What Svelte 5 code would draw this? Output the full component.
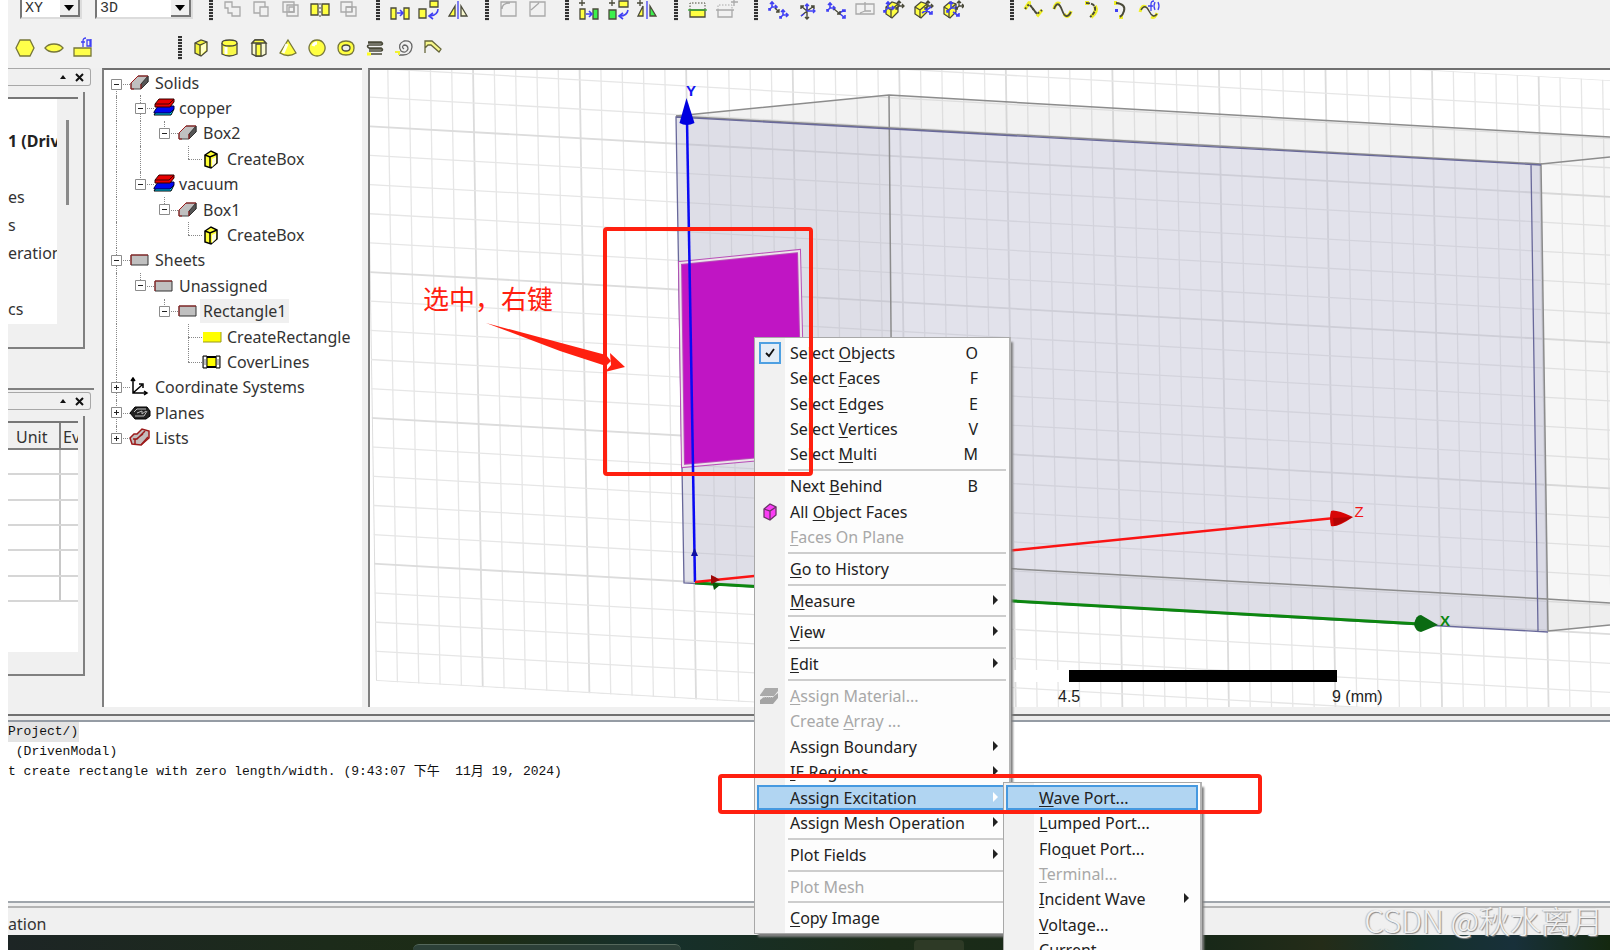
<script>
  const axes = (x, y, s = 5) =>
    `M${x} ${y}v${-s}m-2 2l2-2 2 2M${x} ${y}h${s}m-2-2l2 2-2 2M${x} ${y}l${-s + 2} ${s - 2}m0-2v2h2`;

  const gray = '#a9a9a9', ink = '#4a4a3a', yel = '#ffff42', blu = '#4040f4', grn = '#3cf04c', gold = '#f0f028';
  const p = (d, stroke = ink, fill = 'none', w = 1.3, dash = '') => ({ d, stroke, fill, w, dash });

  const cube = [
    p('M4 7l6-5 6 2v8l-6 6-6-4z', ink, yel), p('M4 7l5 3 7-6M9 10v8', ink)
  ];

  const modelGroups = [
    { name: 'Boolean', tools: [
      { name: 'Unite', s: [p('M4 2h7v5h8v9h-8v-3h-4v-5h-3z', gray)] },
      { name: 'Subtract', s: [p('M10 13H4V2h11v5', gray), p('M10 7h8v9h-8z', gray)] },
      { name: 'Intersect', s: [p('M4 2h11v10H4z', gray), p('M8 5h11v11H8z', gray), p('M10 7h5v5h-5z', gray)] },
      { name: 'Split', s: [p('M3 4h7v11H3z', ink, yel), p('M14 4h7v11h-7z', ink, yel), p('M12 3v14', ink, 'none', 1, '2 2')] },
      { name: 'Imprint', s: [p('M4 2h11v10H4z', gray), p('M9 7h10v9H9z', gray), p('M9 7h6v5', gray)] }
    ] },
    { name: 'Arrange', tools: [
      { name: 'Move', s: [p('M3 8h5v11H3z', ink, yel), p('M16 8h5v11h-5z', ink, yel), p('M9 13h6m-3-3l3 3-3 3', blu, 'none', 1.6)] },
      { name: 'Rotate', s: [p('M2 9h7v9H2z', ink, yel), p('M13 1h8v6h-8z', ink, yel), p('M21 9q0 6-8 7m3-3l-4 3 4 3', blu, 'none', 1.6)] },
      { name: 'Mirror', s: [p('M3 16L9 6v10z', ink, yel), p('M12 1v18', blu), p('M15 6l6 10h-6z', ink, '#f7f7ce')] }
    ] },
    { name: 'Corners', tools: [
      { name: 'Fillet', s: [p('M4 2h15v14H4zM5 9q0-6 8-6', gray)] },
      { name: 'Chamfer', s: [p('M4 2h15v14H4zM5 10l8-7', gray)] }
    ] },
    { name: 'Duplicate', tools: [
      { name: 'Duplicate along line', s: [p('M2 3h6M5 0v6'), p('M3 9h5v10H3z', ink, yel), p('M16 9h5v10h-5z', ink, grn), p('M9 14h6m-3-3l3 3-3 3', blu, 'none', 1.6)] },
      { name: 'Duplicate around axis', s: [p('M3 3h6M6 0v6'), p('M3 10h7v9H3z', ink, grn), p('M13 1h9v6h-9z', ink, yel), p('M22 10q-1 6-8 6m3-3l-4 3 4 3', blu, 'none', 1.6)] },
      { name: 'Duplicate mirror', s: [p('M2 3h6M5 0v6'), p('M3 16L8 6v10z', ink, yel), p('M12 1v18', blu), p('M15 6l6 10h-6z', ink, grn)] }
    ] },
    { name: 'Section', tools: [
      { name: 'Section plane', s: [p('M4 10V3h15v7', ink, 'none', 1, '1.5 1.5'), p('M4 10h15v7H4z', ink, yel), p('M2 10h19', '#36b036')] },
      { name: 'Add section', s: [p('M3 10V5h14v5', gray, 'none', 1, '1.5 1.5'), p('M3 10h14v7H3zM1 10h18M16 2h7M19 0v6', gray)] }
    ] },
    { name: 'Coordinate', tools: [
      { name: 'Offset system', s: [p(axes(6, 7), blu, 'none', 1.6), p(axes(17, 15), blu, 'none', 1.6), p('M9 8l4 4m-3 0h3v-3')] },
      { name: 'Rotated system', s: [p('M12 4v15m-2-2l2 2 2-2M12 11l-6-5m0 3V6h3M12 11l7-5m-3 0h3v3M12 11l-6 5', ink, 'none', 1.4), p('M12 11V4m-2 2l2-2 2 2M12 11h8m-2-2l2 2-2 2M9 14l-3 2', blu)] },
      { name: 'Offset and rotated', s: [p(axes(6, 8), blu, 'none', 1.6), p('M15 13l6 5m-3 0h3v-3', blu, 'none', 1.6), p('M15 13l6-3m-3 0h3v2', blu, 'none', 1.6), p('M10 9l6 5m-3 0h3v-3')] },
      { name: 'Object system', s: [p('M3 4h18v10H3zM12 2v9h6M12 11l-5 2', gray)] },
      { name: 'Face system', s: [...cube, p(axes(6, 8, 6), blu, 'none', 1.6), p(axes(17, 6, 5))] },
      { name: 'Edge system', s: [...cube, p(axes(17, 6, 5)), p('M11 13l9-6M14 9l7 5m-3 0h3v-3', blu, 'none', 1.6)] },
      { name: 'Vertex system', s: [...cube, p(axes(11, 8, 6), blu, 'none', 1.6), p(axes(19, 6, 5)), p('M13 12l6 4m-3 0h3v-3', blu, 'none', 1.6)] }
    ] },
    { name: 'Draw line', tools: [
      { name: 'Line', s: [p('M3 9l4-6h2M15 14l1 1 4-5', gold, 'none', 3.5), p('M3 9l4-5 8 10 5-4', ink, 'none', 1.8, '2 2'), p('M8 5l7 9', ink, 'none', 2)] },
      { name: 'Spline', s: [p('M3 9q2-8 6-5M13 14q4 6 7-3', gold, 'none', 3.5), p('M3 9q4-10 8 1t9 2', ink, 'none', 1.8)] },
      { name: 'Centre arc', s: [p('M5 3h4M15 6q3 6-4 11', gold, 'none', 4), p('M6 3q10 0 9 7-1 4-5 7', ink, 'none', 2, '4 1')] },
      { name: 'Three point arc', s: [p('M5 3h3M10 17h4', gold, 'none', 4), p('M7 3q10 1 8 8-1 4-4 6', ink, 'none', 2), p('M6 9h3v3H6z', blu, blu, 0)] },
      { name: 'Equation curve', s: [p('M2 12q2-8 6-5M13 17q4 2 6-4', gold, 'none', 3), p('M3 10q4-7 8 1t8 3', ink, 'none', 1.5), p('M13 11V4q0-3 3-3M10 6h5M17 2q-2 4 0 8M20 2q2 4 0 8', blu)] }
    ] }
  ];

  const sheetTools = [
    { name: 'Regular polygon', s: [p('M7 4h10l4 8-4 8H7l-4-8z', '#77773a', '#ffff4a')] },
    { name: 'Ellipse', s: [p('M3 12q3-4 9-4t9 4q-3 4-9 4t-9-4z', '#77773a', '#ffff4a')] },
    { name: 'Equation surface', s: [p('M3 12h17v8H3z', '#77773a', '#ffff4a'), p('M12 11V5q0-3 3-3M10 6h4M16 4v6h3V4zM20 3v8', blu)] }
  ];

  const solidTools = [
    { name: 'Box', s: [p('M6 7l6-3 6 2v9l-6 5-6-3z', ink, '#f4f43c'), p('M6 7l5 2 7-3M11 9v11'), p('M12 10l5-3v7l-5 5z', '#fff', '#ffffc8', 0)] },
    { name: 'Cylinder', s: [p('M4 7v11q7 4 15 0V7', ink, '#f8f84a'), p('M4 7q0-3 7.500-3T19 7t-7.500 3T4 7z', ink, yel), p('M8 11v7', '#fff', 'none', 3)] },
    { name: 'Polyhedron', s: [p('M5 7l3-3h8l3 3v11l-4 2H9l-4-2z', ink, '#f8f8d0'), p('M5 7h14l-3-3H8z', ink, yel), p('M9 8h5v12H9z', ink, yel)] },
    { name: 'Cone', s: [p('M12 4l8 13q-8 5-16 0z', '#77773a', '#ffff42'), p('M11 8l-4 9', '#fffff0', 'none', 3)] },
    { name: 'Sphere', s: [p('M12 4a8 8 0 1 0 .1 0z', '#77773a', '#ffff42'), p('M8 10q1-3 4-3', '#fff', 'none', 3)] },
    { name: 'Torus', s: [p('M4 12q0-7 8-7t8 7-8 7-8-7z', '#77773a', '#ffff42'), p('M8 12q0-3 4-3t4 3-4 3-4-3z', ink, '#eee')] },
    { name: 'Helix', s: [p('M5 6h13q3 2 0 3H6q-3 1 0 3h12q3 2 0 3H6M6 18h13M5 7h14M6 13h13', ink, 'none', 1.6), p('M4 18h4', '#ffff20', 'none', 3)] },
    { name: 'Spiral', s: [p('M12 13q-3-2 0-4 4 0 4 4-2 5-7 2-4-7 3-10 8-1 8 6-1 8-9 8H7', '#666'), p('M3 16h4v3', '#f2f236', 'none', 2)] },
    { name: 'Bondwire', s: [p('M4 17V5h7l9 8-2 3-8-7H7l-3 3', '#66663a', '#f8f88a')] }
  ];

  const tree = [
    { t: 'Solids', g: '', own: 'first', x: '-', i: 'solid' },
    { t: 'copper', g: '|', own: 'mid', x: '-', i: 'material' },
    { t: 'Box2', g: '||', own: 'end', x: '-', i: 'solid' },
    { t: 'CreateBox', g: '||.', own: 'end', i: 'box' },
    { t: 'vacuum', g: '|', own: 'end', x: '-', i: 'material' },
    { t: 'Box1', g: '|.', own: 'end', x: '-', i: 'solid' },
    { t: 'CreateBox', g: '|..', own: 'end', i: 'box' },
    { t: 'Sheets', g: '', own: 'mid', x: '-', i: 'sheet' },
    { t: 'Unassigned', g: '|', own: 'end', x: '-', i: 'sheet' },
    { t: 'Rectangle1', g: '|.', own: 'end', x: '-', i: 'sheet', sel: true },
    { t: 'CreateRectangle', g: '|..', own: 'mid', i: 'rect' },
    { t: 'CoverLines', g: '|..', own: 'end', i: 'cover' },
    { t: 'Coordinate Systems', g: '', own: 'mid', x: '+', i: 'cs' },
    { t: 'Planes', g: '', own: 'mid', x: '+', i: 'planes' },
    { t: 'Lists', g: '', own: 'end', x: '+', i: 'lists' }
  ];

  const menu = [
    { t: 'Select &Objects', k: 'O', check: true }, { t: 'Select &Faces', k: 'F' }, { t: 'Select &Edges', k: 'E' },
    { t: 'Select &Vertices', k: 'V' }, { t: 'Select &Multi', k: 'M' }, null,
    { t: 'Next &Behind', k: 'B' }, { t: 'All &Object Faces', icon: 'faces' }, { t: '&Faces On Plane', off: true }, null,
    { t: '&Go to History' }, null, { t: '&Measure', sub: true }, null, { t: '&View', sub: true }, null,
    { t: '&Edit', sub: true }, null,
    { t: '&Assign Material...', off: true, icon: 'mat' }, { t: 'Create &Array ...', off: true },
    { t: 'Assign Boundary', sub: true }, { t: '&IE Regions', sub: true },
    { t: 'Assign Excitation', sub: true, hot: true }, { t: 'Assign Mesh Operation', sub: true }, null,
    { t: 'Plot Fields', sub: true }, null, { t: 'Plot Mesh', off: true }, null, { t: '&Copy Image' }
  ];
  const submenu = [
    { t: '&Wave Port...', hot: true }, { t: '&Lumped Port...' }, { t: 'Flo&quet Port...' }, { t: '&Terminal...', off: true },
    { t: '&Incident Wave', sub: true }, { t: '&Voltage...' }, { t: 'C&urrent...' }
  ];
  const split = (t) => {
    const n = t.indexOf('&');
    return n < 0 ? [t, '', ''] : [t.slice(0, n), t[n + 1], t.slice(n + 2)];
  };

  const log = [
    { t: 'Project/)', picked: true },
    { t: ' (DrivenModal)' },
    { t: 't create rectangle with zero length/width. (9:43:07 下午  11月 19, 2024)' }
  ];

  const cols = Array.from({ length: 60 }, (_, i) => ({ x: 366.5 + 21.31 * i, major: i % 5 === 0 }));
  const rows = Array.from({ length: 24 }, (_, j) => ({ y: 9.7 + 29.15 * j, major: j % 5 === 4 }));
</script>

{#snippet tool(b, h)}
  <button class="tool" aria-label={b.name}>
    <svg width="24" height={h} viewBox="0 0 24 {h}">
      {#each b.s as s}
        <path d={s.d} stroke={s.stroke} fill={s.fill} stroke-width={s.w} stroke-dasharray={s.dash || null} />
      {/each}
    </svg>
  </button>
{/snippet}

{#snippet treeIcon(i)}
  <svg width="22" height="20" viewBox="0 0 22 20">
    {#if i === 'solid'}
      <path d="M2 16V10L9 3h10v6l-7 7z" fill="#c0c0c0" stroke="#444" />
      <path d="M12 16v-5l7-8v6z" fill="#555" stroke="#333" />
      <path d="M2 16v-6l7-7h10M2 16h3M12 16v-5" fill="none" stroke="#9c1a1a" />
    {:else if i === 'material'}
      <path d="M1 17l4-6h16l-3 6z" fill="#00d8ff" stroke="#000" />
      <path d="M1 14l4-6h16v3l-4 4H1z" fill="#0008f0" stroke="#000040" />
      <path d="M2 6l4-5h15v3l-4 5H2z" fill="#e80000" stroke="#300" />
      <path d="M2 6h14l5-5" fill="none" stroke="#400" />
    {:else if i === 'box'}
      <path d="M4 6l6-4 6 3v9l-6 5-6-2z" fill="#ff3" stroke="#000" stroke-width="1.5" />
      <path d="M4 6l5 2 7-3M9 8v10" fill="none" stroke="#000" stroke-width="1.5" />
      <path d="M11 10l4-2v6l-4 4z" fill="#fffde0" />
    {:else if i === 'sheet'}
      <path d="M2 5h17v10H2z" fill="#c0c0c0" stroke="#333" />
      <path d="M2 15V5h17" fill="none" stroke="#a02020" />
    {:else if i === 'rect'}
      <path d="M2 5h18v10H2z" fill="#ff0" />
      <path d="M2 15h18V5" fill="none" stroke="#99991a" />
    {:else if i === 'cover'}
      <path d="M3 5h15v10H3z" fill="#ff0" stroke="#000" stroke-width="2" />
      <path d="M2 4h4v12H2zM15 4h4v12h-4z" fill="#bbb" stroke="#000" />
      <path d="M3 5h2v2H3zM16 5h2v2h-2zM3 13h2v2H3zM16 13h2v2h-2z" fill="#fff" />
    {:else if i === 'cs'}
      <path d="M4 2v14h14M4 16l9-8M2 4l2-3 2 3M15 14l3 2-3 2M10 7h4v4" fill="none" stroke="#000" stroke-width="1.5" />
    {:else if i === 'planes'}
      <path d="M1 10l5-6h12l3 4v5l-4 3H6z" fill="#222" stroke="#000" />
      <path d="M5 9l3-3h9M6 13h9l3-5M8 10l5-2v3l4-3" fill="none" stroke="#bbb" />
    {:else}
      <path d="M1 10l4-4h3l5-5 7 2v7l-8 7-9-1z" fill="#c4bcbc" stroke="#9c1a1a" stroke-width="1.5" />
      <path d="M4 11l4 0 8-8M6 16v-4l8-6M12 17l7-8" fill="none" stroke="#9c1a1a" stroke-width="1.5" />
    {/if}
  </svg>
{/snippet}

{#snippet dockTitle(name)}
  <header class="dock-title">
    <button aria-label="Collapse {name}"><svg width="8" height="6" viewBox="0 0 8 6"><path d="M1 5l3-4 3 4z" fill="#111" /></svg></button>
    <button aria-label="Close {name}"><svg width="9" height="9" viewBox="0 0 9 9"><path d="M1 1l7 7M8 1L1 8" stroke="#111" stroke-width="2" /></svg></button>
  </header>
{/snippet}

{#snippet menuItem(m)}
  {@const part = split(m.t)}
  <button class="item" class:off={m.off} class:hot={m.hot} role="menuitem" disabled={m.off}>
    <span class="lead">
      {#if m.check}
        <span class="check"><svg width="12" height="12" viewBox="0 0 12 12"><path d="M2 6l3 3 5-7" fill="none" stroke="#111" stroke-width="1.8" /></svg></span>
      {:else if m.icon === 'faces'}
        <svg width="22" height="18" viewBox="-3 0 22 18">
          <path d="M2 6l6-5 6 3v8l-6 5-6-3z" fill="#fb3cf6" stroke="#6a3468" stroke-width="1.3" />
          <path d="M2 6l6 2 6-4M8 8v9" fill="none" stroke="#6a3468" stroke-width="1.3" />
        </svg>
      {:else if m.icon === 'mat'}
        <svg width="20" height="18" viewBox="0 0 20 18">
          <path d="M1 8l5-7h13v3l-4 5H1z" fill="#aaa" /><path d="M1 16v-3l4-3h9l5-4v5l-5 6H1z" fill="#a4a4a4" />
          <path d="M3 10h12" stroke="#ddd" stroke-dasharray="1 1" />
        </svg>
      {/if}
    </span>
    <span class="text">{part[0]}<u>{part[1]}</u>{part[2]}</span>
    {#if m.k}<span class="key">{m.k}</span>{/if}
    {#if m.sub}<svg class="more" width="6" height="12" viewBox="0 0 6 12"><path d="M0 0l5 5-5 5z" fill="currentColor" /></svg>{/if}
  </button>
{/snippet}

<div class="app">
  <div class="bar first">
    <label class="combo plane" aria-label="Drawing plane">
      <select><option>XY</option></select>
      <span class="drop"><svg width="10" height="6" viewBox="0 0 10 6"><path d="M0 0h10L5 6z" /></svg></span>
    </label>
    <label class="combo mode" aria-label="Movement mode">
      <select><option>3D</option></select>
      <span class="drop"><svg width="10" height="6" viewBox="0 0 10 6"><path d="M0 0h10L5 6z" /></svg></span>
    </label>
    <div class="groups">
      {#each modelGroups as g}
        <div class="group" role="toolbar" aria-label={g.name}>
          <span class="grip"></span>
          {#each g.tools as b}{@render tool(b, 20)}{/each}
        </div>
      {/each}
    </div>
  </div>
  <div class="bar second">
    <div class="group" role="toolbar" aria-label="Sheets">
      {#each sheetTools as b}{@render tool(b, 24)}{/each}
    </div>
    <div class="group solids" role="toolbar" aria-label="Solids">
      <span class="grip"></span>
      {#each solidTools as b}{@render tool(b, 24)}{/each}
    </div>
  </div>

  <div class="work">
    <aside class="docks">
      <section class="dock project">
        {@render dockTitle('project')}
        <div class="frame">
          <div class="inset split">
            <ul class="names">
              <li><b>1 (Driven)</b></li><li></li><li>es</li><li>s</li><li>erations</li><li></li><li>cs</li>
            </ul>
            <span class="thumb"></span>
          </div>
        </div>
      </section>
      <section class="dock props">
        {@render dockTitle('properties')}
        <div class="frame">
          <div class="inset">
            <table>
              <thead><tr><th>Unit</th><th>Ev</th></tr></thead>
              <tbody>{#each [0, 1, 2, 3, 4, 5] as r (r)}<tr><td></td><td></td></tr>{/each}</tbody>
            </table>
            <div class="blank"></div>
          </div>
        </div>
      </section>
    </aside>

    <nav class="tree">
      <ul>
        {#each tree as n}
          <li>
            {#each n.g.split('') as c}<span class="cell" class:line={c === '|'}></span>{/each}
            <span class="cell own {n.own}">
              {#if n.x}
                <button class="expander" aria-label="Toggle {n.t}">
                  <svg width="11" height="11" viewBox="0 0 11 11">
                    <path d="M.5.5h10v10H.5z" fill="#fff" stroke="#8c8c8c" />
                    <path d={n.x === '-' ? 'M3 5.5h5' : 'M3 5.5h5M5.5 3v5'} stroke="#222" />
                  </svg>
                </button>
              {/if}
            </span>
            <span class="icon">{@render treeIcon(n.i)}</span>
            <span class="name" class:sel={n.sel}>{n.t}</span>
          </li>
        {/each}
      </ul>
    </nav>

    <main class="view">
      <svg viewBox="370 70 1240 637" preserveAspectRatio="xMinYMin slice">
        <defs>
          <clipPath id="plane"><path d="M365.5 8L1610 80.3V752L376 681z" /></clipPath>
        </defs>
        <g clip-path="url(#plane)">
          {#each cols as c}
            <line x1={c.x} y1="70" x2={c.x + 10} y2="707" stroke={c.major ? '#dcdcdc' : '#e6e6e6'} stroke-width={c.major ? 1.8 : 1.3} />
          {/each}
          {#each rows as r}
            <line x1="370" y1={r.y} x2="1610" y2={r.y + 70.6} stroke={r.major ? '#dcdcdc' : '#e6e6e6'} stroke-width={r.major ? 1.8 : 1.3} />
          {/each}
        </g>
        <path d="M676 116L889 95 1610 137V157L1541 164z" fill="rgba(190,190,190,.2)" />
        <path d="M1541 164l69-7v468l-62 6z" fill="rgba(190,190,190,.14)" />
        <path d="M1547 599l63 4v22l-62 6z" fill="rgba(190,190,190,.14)" />
        <path d="M676 116L1541 164 1548 631 684 583z" fill="rgba(186,186,208,.42)" />
        <path d="M687 117L889 128 892 562 1547 599V631L694 583z" fill="rgba(120,120,140,.03)" />
        <path d="M1531 164h10l7 467h-10z" fill="rgba(120,120,150,.06)" />
        <g fill="none" stroke="#8c8c8c" stroke-width="1.5">
          <path d="M676 116L889 95 1610 137M889 95l4 467M893 562L1547 599l63 4M1541 164l69-7M1548 631l62-6" />
          <path d="M676 116L1541 164 1548 631" />
        </g>
        <path d="M1541 165L676 117 684 583 1548 632M1531 164l7 467" fill="none" stroke="#68689a" stroke-width="1.3" />

        <path d="M679 263L799 251 805 455 683 466z" fill="#c015c4" />
        <path d="M680 263L799 251 804 455 683 466z" fill="none" stroke="#b850b8" stroke-width="4" />
        <path d="M680 263L799 251 804 455 683 466z" fill="none" stroke="#ece6ea" stroke-width="2" />

        <path d="M687 120L695 582" stroke="#0a0af4" stroke-width="2.5" />
        <path d="M686.5 98l8 25q-8 4-15 0z" fill="#0000e0" />
        <path d="M691 556l3.5-8 3.5 8z" fill="#1010a0" />
        <path d="M695 583L1420 624" stroke="#0c870f" stroke-width="3" />
        <path d="M695 582L1335 518" stroke="#fa1414" stroke-width="2.5" />
        <path d="M712 581l8 4-6 5z" fill="#085a08" />
        <path d="M711 575q5 2 9 5l-9 4z" fill="#a00808" />
        <path d="M1331 511q4-2 22 6-16 11-22 9-2-8 0-15z" fill="#d80606" />
        <path d="M1334 526q8-3 19-9l-20 1z" fill="#9c0404" opacity=".6" />
        <path d="M1414 624q2-9 7-9l17 10-17 7q-6-1-7-8z" fill="#0a6b12" />
        <g font-family="Liberation Sans, Arial, sans-serif" text-anchor="middle">
          <text x="691" y="96" font-size="15" font-weight="bold" fill="#1414f0">Y</text>
          <text x="1359" y="517" font-size="15" fill="#f41414">Z</text>
          <text x="1445" y="626" font-size="15" font-weight="bold" fill="#0c870f">X</text>
        </g>
        <path d="M1012 670h57v12h-57z" fill="#fff" />
        <path d="M1069 670h268v12h-268z" fill="#000" />
        <g font-family="Liberation Sans, Arial, sans-serif" font-size="16" fill="#222">
          <text x="1058" y="702">4.5</text>
          <text x="1332" y="702">9 (mm)</text>
        </g>
      </svg>
    </main>
  </div>

  <section class="log">
    {#each log as l}
      <p><span class:picked={l.picked}>{l.t}</span></p>
    {/each}
  </section>
  <footer class="status">ation</footer>
  <div class="taskbar"><span class="search"></span><span class="tile"></span></div>

  <div class="menu main-menu" role="menu">
    {#each menu as m}
      {#if m}{@render menuItem(m)}{:else}<hr />{/if}
    {/each}
  </div>
  <div class="menu sub-menu" role="menu">
    {#each submenu as m}{@render menuItem(m)}{/each}
  </div>

  <div class="mark around-sheet"></div>
  <div class="mark around-port"></div>
  <p class="note">选中，右键</p>
  <svg class="arrow" width="140" height="52" viewBox="0 0 140 52">
    <path d="M0 0L120 32 125 38 120 43 74 28z" fill="#ff2010" />
    <path d="M124 30L139 44 119 49 125 42z" fill="#ff2010" />
  </svg>
  <p class="credit">CSDN @秋水离月</p>
</div>

<style>
  :global(body) { margin: 0; background: #fff; overflow: hidden; }
  * { box-sizing: border-box; }
  p, ul { margin: 0; padding: 0; list-style: none; }
  button, select { font: inherit; color: inherit; border: 0; background: none; padding: 0; margin: 0; }
  svg { display: block; }

  .app {
    position: relative; height: 100vh; margin-left: 8px; overflow: hidden;
    display: flex; flex-direction: column; background: #f0f0f0; color: #333;
    font: 16px/20px "Noto Sans", "Noto Sans CJK SC", sans-serif;
  }

  .bar { display: flex; align-items: flex-start; flex: none; background: #f1f1f1; }
  .first { height: 28px; }
  .second { height: 40px; padding: 8px 0 0 2px; }
  .groups { display: flex; gap: 13px; margin-left: 16px; }
  .groups .group:last-child { margin-left: 31px; }
  .group { display: flex; }
  .solids { margin-left: 81px; }
  .grip {
    width: 4px; height: 21px; margin-right: 5px;
    background: repeating-linear-gradient(#333 0 2px, #ddd 2px 3px);
  }
  .second .grip { height: 24px; }
  .solids .grip { margin-right: 4px; }
  .tool { width: 29px; display: flex; justify-content: center; }

  .combo {
    display: flex; height: 19px; background: #fff; color: #333;
    border: 2px solid #dcdcdc; border-left-color: #777; border-top: 0;
    font: 15px/16px "Liberation Mono", monospace;
  }
  .combo select { appearance: none; flex: 1; min-width: 0; padding-left: 3px; }
  .plane { width: 62px; margin-left: 12px; }
  .mode { width: 98px; margin-left: 13px; }
  .drop {
    width: 20px; display: flex; align-items: center; justify-content: center;
    background: #f0f0f0; border-right: 2px solid #777; border-bottom: 2px solid #777;
  }

  .work { flex: 1; min-height: 0; display: flex; }
  .docks { width: 86px; flex: none; display: flex; flex-direction: column; gap: 39px; }
  .dock-title {
    display: flex; align-items: center; justify-content: flex-end; gap: 8px;
    height: 18px; width: 83px; padding-right: 6px;
    border: 1px solid #a8a8a8; border-left: 0; border-radius: 0 3px 3px 0;
  }
  .frame {
    width: 77px; margin-top: 6px; padding: 5px 5px 0 0;
    border-right: 2px solid #808080; border-bottom: 2px solid #808080;
  }
  .inset { border-top: 2px solid #777; overflow: hidden; }
  .project .frame { height: 257px; }
  .split { display: flex; width: 70px; }
  .names { width: 49px; height: 225px; padding-top: 28px; background: #fff; overflow: hidden; white-space: nowrap; }
  .names li { height: 28px; line-height: 28px; }
  .names b { color: #222; }
  .thumb { width: 3px; height: 85px; margin: 21px 0 0 9px; background: #8a8a8a; }
  .props { border-top: 2px solid #808080; padding-top: 2px; }
  .props .frame { height: 260px; }
  .props .inset { width: 70px; }
  table { table-layout: fixed; width: 90px; height: 179px; border-collapse: collapse; background: #fff; }
  th { height: 26px; padding: 3px 0 0 8px; font-weight: 400; text-align: left; background: #f0f0f0; border-bottom: 2px solid #808080; }
  th:first-child { width: 52px; border-right: 2px solid #808080; }
  th + th { padding-left: 2px; }
  td { padding: 0; border-bottom: 2px solid #d6d6d6; }
  td:first-child { border-right: 2px solid #c8c8c8; }
  .blank { height: 50px; background: #fff; }

  .tree {
    flex: none; width: 260px; margin: 0 0 7px 8px; background: #fff;
    border-left: 2px solid #808080; border-top: 2px solid #707070;
  }
  .tree ul { display: grid; grid-template-rows: repeat(15, minmax(0, 1fr)); height: 381px; }
  .tree li { display: flex; align-items: stretch; min-height: 0; white-space: nowrap; }
  .cell { position: relative; width: 24px; flex: none; display: flex; align-items: center; justify-content: center; }
  .line::before, .own::before { content: ""; position: absolute; left: 12px; top: 0; height: 100%; border-left: 1px dotted #888; }
  .own.end::before { height: 50%; }
  .own.first::before { top: 50%; height: 50%; }
  .own::after { content: ""; position: absolute; left: 12px; top: 50%; width: 14px; border-top: 1px dotted #888; }
  .expander { position: relative; z-index: 1; }
  .icon { width: 24px; display: flex; align-items: center; justify-content: center; }
  .name { align-self: center; padding: 2px 3px; }
  .sel { background: #f0f0f0; }

  .view {
    flex: 1; min-width: 0; margin: 0 0 7px 6px; overflow: hidden; background: #fff;
    border-left: 2px solid #808080; border-top: 2px solid #707070;
  }
  .view svg { width: 100%; height: 100%; }

  .log {
    flex: none; height: 189px; margin-bottom: 3px; padding-top: 6px; color: #111; background: #fff;
    border-top: 2px solid #707070; border-bottom: 2px solid #a0a6ac;
    box-shadow: inset 0 4px #ececec, inset 0 6px #959ca4;
    font: 13px/20px "Liberation Mono", "Noto Sans CJK SC", monospace;
  }
  .log p { height: 20px; white-space: pre; }
  .picked { display: inline-block; background: #e4e4e4; padding-right: 1px; }
  .status { flex: none; height: 29px; padding-top: 6px; border-top: 2px solid #b4b4b4; }
  .taskbar {
    flex: none; height: 15px; display: flex; align-items: flex-end;
    background: linear-gradient(90deg, #1d2525, #1c2b1a 20%, #1d2c14 30%, #16302c 40%, #1b2c18 55%, #182818 75%, #242c18 82%, #15302a 88%, #18303a 94%, #14280f);
  }
  .search { width: 268px; height: 6px; margin-left: 405px; background: #2c4038; border-top: 1px solid #55685c; border-radius: 6px 6px 0 0; }
  .tile { width: 50px; height: 10px; margin-left: 233px; background: #2e3a26; border-radius: 4px 4px 0 0; }

  .menu {
    position: absolute; display: flex; flex-direction: column; color: #222;
    border: 1px solid #a8a8a8; border-right: 2px solid #b4b4b4; padding: 2px;
    background: linear-gradient(90deg, #f1f1f1 30px, #fdfdfd 30px);
    box-shadow: 3px 4px 2px -1px #808080;
  }
  .main-menu { left: 746px; top: 337px; width: 257px; height: 597px; }
  .sub-menu { left: 995px; top: 782px; width: 199px; height: 184px; }
  .item {
    flex: 4 1 0; min-height: 0; display: flex; align-items: center;
    text-align: left; line-height: 20px; white-space: nowrap;
  }
  .lead { width: 33px; display: flex; align-items: center; padding-left: 2px; }
  .check {
    width: 22px; height: 22px; display: flex; align-items: center; justify-content: center;
    background: #e3edf6; border: 2px solid #4ea0e2;
  }
  .text { flex: 1; }
  .key { padding-right: 29px; }
  .more { margin-right: 8px; }
  .off { color: #a8a8a8; }
  .hot { background: #b1d5f2; box-shadow: inset 0 0 0 2px #4699e0; }
  .hot .more { color: #fff; }
  u { text-underline-offset: 2px; }
  hr { flex: 1 1 0; width: auto; margin: 0 1px 0 31px; border: 0; background: linear-gradient(#cdcdcd, #cdcdcd) center / 100% 2px no-repeat; }

  .mark { position: absolute; border: 4px solid #ff2010; border-radius: 4px; pointer-events: none; }
  .around-sheet { left: 595px; top: 227px; width: 210px; height: 249px; }
  .around-port { left: 710px; top: 774px; width: 544px; height: 40px; }
  .note { position: absolute; left: 415px; top: 283px; color: #ff2010; font: 26px/30px "Noto Sans CJK SC", sans-serif; }
  .arrow { position: absolute; left: 478px; top: 323px; }
  .credit {
    position: absolute; right: 7px; bottom: 10px; color: #f2f2f2; text-shadow: 1px 1px 1px #8a8a8a, -1px 0 1px #bbb;
    font: 300 31px/40px "Noto Sans CJK SC", sans-serif;
  }
</style>
